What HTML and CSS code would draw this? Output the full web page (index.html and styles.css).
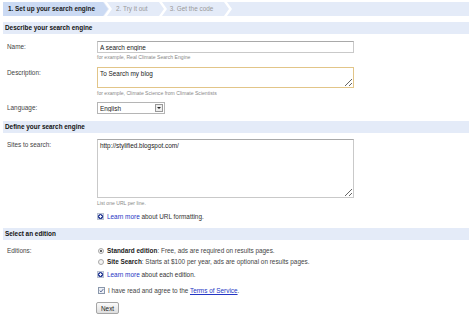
FILE: index.html
```html
<!DOCTYPE html>
<html lang="en">
<head>
    <meta charset="UTF-8">
    <meta name="viewport" content="width=device-width, initial-scale=1.0">
    <title>Create a search engine</title>
    <link rel="stylesheet" href="styles.css">
</head>
<body>
<div class="steps">
    <div class="step active">1. Set up your search engine</div>
    <svg class="chevron" width="10" height="14" viewBox="0 0 10 14"><polygon points="0,0 5,7 0,14" fill="#cbdaf3"/><polygon points="1,0 4,0 9,7 4,14 1,14 6,7" fill="#fff"/></svg>
    <div class="step step-2">2. Try it out</div>
    <svg class="chevron" width="10" height="14" viewBox="0 0 10 14"><polygon points="1,0 4,0 9,7 4,14 1,14 6,7" fill="#fff"/></svg>
    <div class="step step-3">3. Get the code</div>
    <svg class="chevron" width="10" height="14" viewBox="0 0 10 14"><polygon points="1,0 4,0 9,7 4,14 1,14 6,7" fill="#fff"/></svg>
</div>

<div class="section-title">Describe your search engine</div>

<div class="row row-name">
    <label class="label" for="name">Name:</label>
    <div class="field">
        <input id="name" class="text-input" type="text" value="A search engine">
        <div class="hint">for example, Real Climate Search Engine</div>
    </div>
</div>

<div class="row row-desc">
    <label class="label" for="desc">Description:</label>
    <div class="field">
        <textarea id="desc" class="text-area focused">To Search my blog</textarea>
        <div class="hint">for example, Climate Science from Climate Scientists</div>
    </div>
</div>

<div class="row row-lang">
    <label class="label" for="lang">Language:</label>
    <div class="field">
        <div class="select">
            <select id="lang"><option>English</option></select>
            <span class="select-arrow"></span>
        </div>
    </div>
</div>

<div class="section-title">Define your search engine</div>

<div class="row row-sites">
    <label class="label" for="sites">Sites to search:</label>
    <div class="field">
        <textarea id="sites" class="text-area sites">http://stylified.blogspot.com/</textarea>
        <div class="hint">List one URL per line.</div>
        <div class="more more-url">
            <svg class="plus" width="7" height="7" viewBox="0 0 7 7"><rect x="0.5" y="0.5" width="6" height="6" fill="#fff" stroke="#b8c0d0"/><circle cx="3.5" cy="3.5" r="2.6" fill="#2b3f96"/><path d="M3.5 2v3M2 3.5h3" stroke="#fff" stroke-width="0.9"/></svg>
            <span><a href="#">Learn more</a> about URL formatting.</span>
        </div>
    </div>
</div>

<div class="section-title">Select an edition</div>

<div class="row row-edition">
    <div class="label">Editions:</div>
    <div class="field">
        <div class="option"><span class="radio checked"></span><span><b>Standard edition</b>: Free, ads are required on results pages.</span></div>
        <div class="option"><span class="radio"></span><span><b>Site Search</b>: Starts at $100 per year, ads are optional on results pages.</span></div>
        <div class="more more-edition">
            <svg class="plus" width="7" height="7" viewBox="0 0 7 7"><rect x="0.5" y="0.5" width="6" height="6" fill="#fff" stroke="#b8c0d0"/><circle cx="3.5" cy="3.5" r="2.6" fill="#2b3f96"/><path d="M3.5 2v3M2 3.5h3" stroke="#fff" stroke-width="0.9"/></svg>
            <span><a href="#">Learn more</a> about each edition.</span>
        </div>
        <div class="agree">
            <svg class="checkbox" width="7" height="7" viewBox="0 0 7 7"><rect x="0.5" y="0.5" width="6" height="6" fill="#eef1f6" stroke="#8a97ab"/><path d="M1.7 3.6l1.3 1.3 2.3-2.8" fill="none" stroke="#4a5a8a" stroke-width="0.9"/></svg>
            <span>I have read and agree to the <a class="tos" href="#">Terms of Service</a>.</span>
        </div>
        <button class="next">Next</button>
    </div>
</div>
</body>
</html>
```

FILE: styles.css
```css
body {
    margin: 0;
    background-color: #fff;
    font-family: "Liberation Sans", Arial, sans-serif;
    font-size: 6.4px;
    color: #333;
}

.steps {
    display: flex;
    align-items: center;
    height: 14px;
    margin: 2px 5px 0 3px;
    background-color: #e4ebf8;
}

.step {
    line-height: 14px;
    color: #999;
}

.step.active {
    height: 14px;
    padding: 0 8px 0 5px;
    background-color: #cbdaf3;
    font-weight: bold;
    color: #1a1a1a;
}

.step-2 {
    padding: 0 10px 0 3px;
}

.step-3 {
    padding: 0 10px 0 2px;
}

.chevron {
    display: block;
}

.section-title {
    height: 12px;
    line-height: 12px;
    margin: 6px 5px 0 3px;
    padding-left: 2px;
    background-color: #e4ebf8;
    font-weight: bold;
    color: #111;
}

.row {
    display: flex;
    margin-top: 6px;
}

.row-name {
    margin-top: 7px;
}

.row-lang {
    margin-top: 5px;
}

.row-lang + .section-title, .row-sites + .section-title {
    margin-top: 7px;
}

.row-edition {
    margin-top: 5px;
}

.label {
    width: 97px;
    padding-left: 7px;
    box-sizing: border-box;
    line-height: 12px;
    color: #444;
}

.row-edition .label {
    line-height: 11px;
}

.field {
    display: flex;
    flex-direction: column;
    align-items: flex-start;
}

.text-input, .text-area {
    display: block;
    width: 257px;
    margin: 0;
    padding: 0 2px;
    box-sizing: border-box;
    border: 1px solid #c9c9c9;
    border-top-color: #a9a9a9;
    font-family: inherit;
    font-size: 6.4px;
    color: #222;
    background-color: #fff;
}

.text-input {
    height: 12px;
}

.text-area {
    height: 21px;
    padding-top: 2px;
    line-height: 8px;
    overflow: hidden;
}

.text-area.focused {
    border-color: #e2c588;
}

.text-area.sites {
    height: 59px;
}

.hint {
    margin-top: 1px;
    line-height: 7px;
    font-size: 5.1px;
    color: #888;
}

.row-desc .hint, .row-sites .hint {
    margin-top: 2px;
}

.select {
    position: relative;
    width: 68px;
    height: 12px;
}

.select select {
    appearance: none;
    width: 100%;
    height: 12px;
    margin: 0;
    padding: 0 2px;
    border: 1px solid #b5b5b5;
    border-radius: 0;
    background-color: #fff;
    font-family: inherit;
    font-size: 6.4px;
    color: #222;
}

.select-arrow {
    position: absolute;
    top: 2px;
    right: 2px;
    width: 8px;
    height: 8px;
    box-sizing: border-box;
    border: 1px solid #999;
    background-color: #eee;
}

.select-arrow::after {
    content: "";
    position: absolute;
    top: 2px;
    left: 1px;
    border-left: 2px solid transparent;
    border-right: 2px solid transparent;
    border-top: 2px solid #222;
}

.more {
    display: flex;
    align-items: center;
    gap: 3px;
    line-height: 9px;
    color: #333;
}

.more-url {
    margin-top: 5px;
}

.more-edition {
    margin-top: 3px;
}

.plus, .checkbox {
    display: block;
    flex-shrink: 0;
}

.more a {
    color: #2436c4;
    text-decoration: none;
}

.option {
    display: flex;
    align-items: center;
    line-height: 11px;
    color: #444;
}

.option b {
    color: #222;
}

.radio {
    width: 6px;
    height: 6px;
    margin: 0 3px 0 1px;
    box-sizing: border-box;
    border: 1px solid #a8a8a8;
    border-radius: 50%;
    background-color: #f3f3f3;
    position: relative;
}

.radio.checked::after {
    content: "";
    position: absolute;
    top: 1px;
    left: 1px;
    width: 2px;
    height: 2px;
    border-radius: 50%;
    background-color: #333;
}

.agree {
    display: flex;
    align-items: center;
    gap: 3px;
    margin-top: 6px;
    line-height: 11px;
    color: #444;
}

.agree .checkbox {
    margin-left: 1px;
}

.tos {
    color: #2436c4;
}

.next {
    height: 12px;
    margin-top: 6px;
    margin-left: -1px;
    padding: 0 4px;
    border: 1px solid #a5a5a5;
    border-radius: 2px;
    background: linear-gradient(#fbfbfb, #dedede);
    font-family: inherit;
    font-size: 6.4px;
    color: #222;
    cursor: pointer;
}
```
